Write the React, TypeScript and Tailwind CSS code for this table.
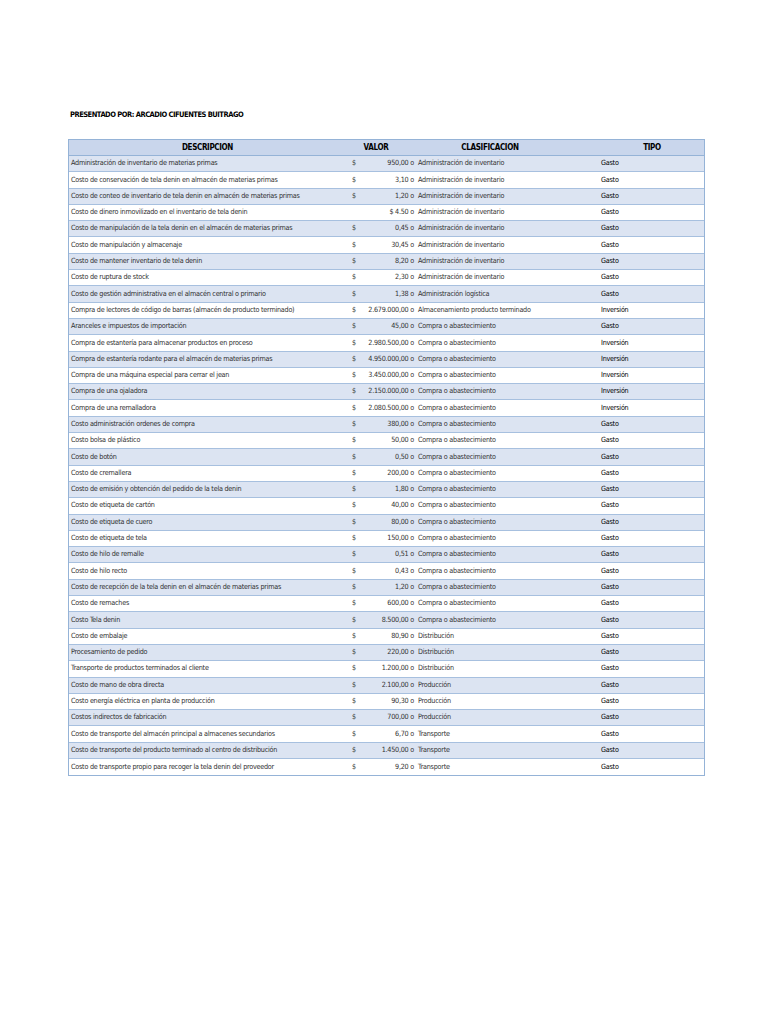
import React from 'react';

type Row = { d: string; v: string; c: string; t: string; noSign?: boolean };

const rows: Row[] = [
  { d: 'Administración de inventario de materias primas', v: '950,00', c: 'Administración de inventario', t: 'Gasto' },
  { d: 'Costo de conservación de tela denin en almacén de materias primas', v: '3,10', c: 'Administración de inventario', t: 'Gasto' },
  { d: 'Costo de conteo de inventario de tela denin en almacén de materias primas', v: '1,20', c: 'Administración de inventario', t: 'Gasto' },
  { d: 'Costo de dinero inmovilizado en el inventario de tela denin', v: '$ 4.50', c: 'Administración de inventario', t: 'Gasto', noSign: true },
  { d: 'Costo de manipulación de la tela denin en el almacén de materias primas', v: '0,45', c: 'Administración de inventario', t: 'Gasto' },
  { d: 'Costo de manipulación y almacenaje', v: '30,45', c: 'Administración de inventario', t: 'Gasto' },
  { d: 'Costo de mantener inventario de tela denin', v: '8,20', c: 'Administración de inventario', t: 'Gasto' },
  { d: 'Costo de ruptura de stock', v: '2,30', c: 'Administración de inventario', t: 'Gasto' },
  { d: 'Costo de gestión administrativa en el almacén central o primario', v: '1,38', c: 'Administración logística', t: 'Gasto' },
  { d: 'Compra de lectores de código de barras (almacén de producto terminado)', v: '2.679.000,00', c: 'Almacenamiento producto terminado', t: 'Inversión' },
  { d: 'Aranceles e impuestos de importación', v: '45,00', c: 'Compra o abastecimiento', t: 'Gasto' },
  { d: 'Compra de estantería para almacenar productos en proceso', v: '2.980.500,00', c: 'Compra o abastecimiento', t: 'Inversión' },
  { d: 'Compra de estantería rodante para el almacén de materias primas', v: '4.950.000,00', c: 'Compra o abastecimiento', t: 'Inversión' },
  { d: 'Compra de una máquina especial para cerrar el jean', v: '3.450.000,00', c: 'Compra o abastecimiento', t: 'Inversión' },
  { d: 'Compra de una ojaladora', v: '2.150.000,00', c: 'Compra o abastecimiento', t: 'Inversión' },
  { d: 'Compra de una remalladora', v: '2.080.500,00', c: 'Compra o abastecimiento', t: 'Inversión' },
  { d: 'Costo administración ordenes de compra', v: '380,00', c: 'Compra o abastecimiento', t: 'Gasto' },
  { d: 'Costo bolsa de plástico', v: '50,00', c: 'Compra o abastecimiento', t: 'Gasto' },
  { d: 'Costo de botón', v: '0,50', c: 'Compra o abastecimiento', t: 'Gasto' },
  { d: 'Costo de cremallera', v: '200,00', c: 'Compra o abastecimiento', t: 'Gasto' },
  { d: 'Costo de emisión y obtención del pedido de la tela denin', v: '1,80', c: 'Compra o abastecimiento', t: 'Gasto' },
  { d: 'Costo de etiqueta de cartón', v: '40,00', c: 'Compra o abastecimiento', t: 'Gasto' },
  { d: 'Costo de etiqueta de cuero', v: '80,00', c: 'Compra o abastecimiento', t: 'Gasto' },
  { d: 'Costo de etiqueta de tela', v: '150,00', c: 'Compra o abastecimiento', t: 'Gasto' },
  { d: 'Costo de hilo de remalle', v: '0,51', c: 'Compra o abastecimiento', t: 'Gasto' },
  { d: 'Costo de hilo recto', v: '0,43', c: 'Compra o abastecimiento', t: 'Gasto' },
  { d: 'Costo de recepción de la tela denin en el almacén de materias primas', v: '1,20', c: 'Compra o abastecimiento', t: 'Gasto' },
  { d: 'Costo de remaches', v: '600,00', c: 'Compra o abastecimiento', t: 'Gasto' },
  { d: 'Costo Tela denin', v: '8.500,00', c: 'Compra o abastecimiento', t: 'Gasto' },
  { d: 'Costo de embalaje', v: '80,90', c: 'Distribución', t: 'Gasto' },
  { d: 'Procesamiento de pedido', v: '220,00', c: 'Distribución', t: 'Gasto' },
  { d: 'Transporte de productos terminados al cliente', v: '1.200,00', c: 'Distribución', t: 'Gasto' },
  { d: 'Costo de mano de obra directa', v: '2.100,00', c: 'Producción', t: 'Gasto' },
  { d: 'Costo energía eléctrica en planta de producción', v: '90,30', c: 'Producción', t: 'Gasto' },
  { d: 'Costos indirectos de fabricación', v: '700,00', c: 'Producción', t: 'Gasto' },
  { d: 'Costo de transporte del almacén principal a almacenes secundarios', v: '6,70', c: 'Transporte', t: 'Gasto' },
  { d: 'Costo de transporte del producto terminado al centro de distribución', v: '1.450,00', c: 'Transporte', t: 'Gasto' },
  { d: 'Costo de transporte propio para recoger la tela denin del proveedor', v: '9,20', c: 'Transporte', t: 'Gasto' },
];

const font = { fontFamily: '"Liberation Sans Narrow", "DejaVu Sans Condensed", "Liberation Sans", sans-serif' };

export default function App() {
  return (
    <div className="w-[768px] h-[1024px] bg-white" style={font}>
      <div className="pt-[109px] pl-[70px]">
        <h1 className="text-[7.5px] leading-[12px] font-bold tracking-[-0.5px] text-black">PRESENTADO POR: ARCADIO CIFUENTES BUITRAGO</h1>
      </div>

      <div className="mt-[18px] ml-[68px] w-[637px] border border-[#95b3d7] text-[7.2px] tracking-[-0.25px]">
        <div className="grid grid-cols-[277px_14px_54px_186px_104px] h-[16px] items-center bg-[#c9d6ec] border-b border-[#95b3d7] font-bold text-black text-[8px] tracking-[-0.35px]">
          <div className="text-center">DESCRIPCION</div>
          <div className="col-span-2 text-center pr-[8px]">VALOR</div>
          <div className="text-center pr-[34px]">CLASIFICACION</div>
          <div className="text-center">TIPO</div>
        </div>
        {rows.map((r, i) => (
          <div
            key={i}
            className={`grid grid-cols-[277px_14px_54px_186px_104px] h-[16.3px] items-center border-b last:border-b-0 border-[#a7c0df] ${
              i % 2 === 0 ? 'bg-[#dce4f2]' : 'bg-white'
            }`}
          >
            <div className="pl-[2px] text-[#2f2f2f] whitespace-nowrap overflow-hidden">{r.d}</div>
            <div className="pl-[6px] text-[#444]">{r.noSign ? '' : '$'}</div>
            <div className="text-right text-[#333] whitespace-nowrap">{r.v} o</div>
            <div className="pl-[4px] text-[#333] whitespace-nowrap">{r.c}</div>
            <div className="pl-[1px] text-black">{r.t}</div>
          </div>
        ))}
      </div>
    </div>
  );
}
